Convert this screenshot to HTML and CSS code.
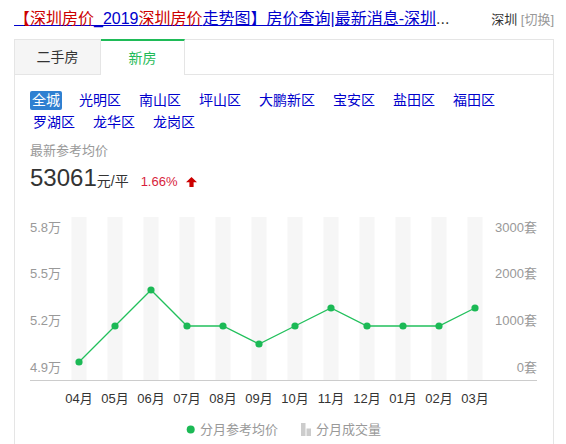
FILE: index.html
```html
<!DOCTYPE html>
<html lang="zh-CN">
<head>
<meta charset="utf-8">
<title>深圳房价</title>
<link rel="stylesheet" href="styles.css">
</head>
<body>
<div class="header">
  <div class="title"><a class="title-link" href="#"><em>【深圳房价</em>_2019<em>深圳房价</em>走势图】房价查询|最新消息-深圳</a><span class="ellipsis">...</span></div>
  <div class="city">深圳 <span class="switch">[切换]</span></div>
</div>
<div class="card">
  <div class="tabs">
    <div class="tab">二手房</div>
    <div class="tab active">新房</div>
    <div class="tab-fill"></div>
  </div>
  <div class="card-body">
    <div class="districts">
      <a class="district current" href="#">全城</a>
      <a class="district" href="#">光明区</a>
      <a class="district" href="#">南山区</a>
      <a class="district" href="#">坪山区</a>
      <a class="district" href="#">大鹏新区</a>
      <a class="district" href="#">宝安区</a>
      <a class="district" href="#">盐田区</a>
      <a class="district" href="#">福田区</a>
      <a class="district row2" href="#">罗湖区</a>
      <a class="district" href="#">龙华区</a>
      <a class="district" href="#">龙岗区</a>
    </div>
    <div class="price-label">最新参考均价</div>
    <div class="price">
      <span class="price-num">53061</span><span class="price-unit">元/平</span><span class="price-change">1.66%</span><svg class="up-arrow" width="11" height="10" viewBox="0 0 11 10"><path d="M5.5 0 L11 5.2 L7.6 5.2 L7.6 10 L3.4 10 L3.4 5.2 L0 5.2 Z" fill="#cc0000"/></svg>
    </div>
    <svg class="chart" width="537" height="244" viewBox="15 200 537 244">
      <g fill="#f6f6f6">
        <rect x="71.5" y="217" width="15" height="163"/>
        <rect x="107.5" y="217" width="15" height="163"/>
        <rect x="143.5" y="217" width="15" height="163"/>
        <rect x="179.5" y="217" width="15" height="163"/>
        <rect x="215.5" y="217" width="15" height="163"/>
        <rect x="251.5" y="217" width="15" height="163"/>
        <rect x="287.5" y="217" width="15" height="163"/>
        <rect x="323.5" y="217" width="15" height="163"/>
        <rect x="359.5" y="217" width="15" height="163"/>
        <rect x="395.5" y="217" width="15" height="163"/>
        <rect x="431.5" y="217" width="15" height="163"/>
        <rect x="467.5" y="217" width="15" height="163"/>
      </g>
      <line x1="30" y1="380.5" x2="537" y2="380.5" stroke="#cccccc" stroke-width="1"/>
      <g class="axis-text" fill="#999999">
        <text x="30" y="227">5.8万</text>
        <text x="30" y="273.5">5.5万</text>
        <text x="30" y="320">5.2万</text>
        <text x="30" y="367">4.9万</text>
      </g>
      <g class="axis-text" fill="#999999" text-anchor="end">
        <text x="537" y="227">3000套</text>
        <text x="537" y="273.5">2000套</text>
        <text x="537" y="320">1000套</text>
        <text x="537" y="367">0套</text>
      </g>
      <polyline fill="none" stroke="#22c05c" stroke-width="1.3" points="79,362 115,326 151,290 187,326 223,326 259,344 295,326 331,308 367,326 403,326 439,326 475,308"/>
      <g fill="#1bb955">
        <circle cx="79" cy="362" r="3.6"/>
        <circle cx="115" cy="326" r="3.6"/>
        <circle cx="151" cy="290" r="3.6"/>
        <circle cx="187" cy="326" r="3.6"/>
        <circle cx="223" cy="326" r="3.6"/>
        <circle cx="259" cy="344" r="3.6"/>
        <circle cx="295" cy="326" r="3.6"/>
        <circle cx="331" cy="308" r="3.6"/>
        <circle cx="367" cy="326" r="3.6"/>
        <circle cx="403" cy="326" r="3.6"/>
        <circle cx="439" cy="326" r="3.6"/>
        <circle cx="475" cy="308" r="3.6"/>
      </g>
      <g class="axis-text" fill="#333333" text-anchor="middle">
        <text x="79" y="398">04月</text>
        <text x="115" y="398">05月</text>
        <text x="151" y="398">06月</text>
        <text x="187" y="398">07月</text>
        <text x="223" y="398">08月</text>
        <text x="259" y="398">09月</text>
        <text x="295" y="398">10月</text>
        <text x="331" y="398">11月</text>
        <text x="367" y="398">12月</text>
        <text x="403" y="398">01月</text>
        <text x="439" y="398">02月</text>
        <text x="475" y="398">03月</text>
      </g>
      <circle cx="190.7" cy="429.5" r="4" fill="#1bb955"/>
      <text class="axis-text legend-text" x="200" y="429.5" fill="#999999">分月参考均价</text>
      <rect x="301" y="423" width="4.5" height="13" fill="#cccccc"/>
      <rect x="306.5" y="428.5" width="4.5" height="7.5" fill="#cccccc"/>
      <text class="axis-text legend-text" x="316" y="429.5" fill="#999999">分月成交量</text>
    </svg>
  </div>
</div>
</body>
</html>
```

FILE: styles.css
```css
html, body {
  margin: 0;
  padding: 0;
  background: #ffffff;
}

body {
  font-family: "Liberation Sans", Arial, "Noto Sans CJK SC", sans-serif;
  color: #333333;
  width: 566px;
  height: 444px;
  overflow: hidden;
}

.header {
  display: flex;
  justify-content: space-between;
  align-items: baseline;
  height: 39px;
  box-sizing: border-box;
  padding: 8px 12px 0 14px;
}

.title {
  font-size: 16px;
  line-height: 22px;
  white-space: nowrap;
}

.title-link {
  color: #0000cc;
  text-decoration: underline;
}

.title-link em {
  font-style: normal;
  color: #cc0000;
}

.ellipsis {
  color: #333333;
}

.city {
  font-size: 13px;
  line-height: 22px;
  color: #333333;
  white-space: nowrap;
}

.switch {
  color: #999999;
}

.card {
  margin-left: 14px;
  width: 540px;
  height: 405px;
  box-sizing: border-box;
  border: 1px solid #e5e5e5;
  border-bottom: none;
}

.tabs {
  display: flex;
  align-items: flex-start;
  height: 35px;
}

.tab {
  width: 85px;
  height: 34px;
  line-height: 34px;
  text-align: center;
  font-size: 14px;
  color: #333333;
  background: #f5f5f5;
  border-right: 1px solid #e5e5e5;
  border-bottom: 1px solid #e5e5e5;
}

.tab.active {
  width: 83px;
  margin-top: -1px;
  height: 34px;
  border-top: 2px solid #1fbb58;
  border-bottom: none;
  background: #ffffff;
  color: #1fbb58;
}

.tab-fill {
  flex: 1;
  height: 34px;
  border-bottom: 1px solid #e5e5e5;
}

.card-body {
  padding: 14px 0 0 15px;
}

.districts {
  display: flex;
  flex-wrap: wrap;
  column-gap: 16px;
  width: 520px;
  height: 44px;
  font-size: 14px;
  line-height: 22px;
}

.district {
  color: #0000cc;
  text-decoration: none;
  padding: 0 1px;
}

.district.row2 {
  padding-left: 3px;
}

.district.current {
  align-self: center;
  height: 19px;
  line-height: 19px;
  margin-top: 1px;
  padding: 0 2px;
  background: #2f80d1;
  color: #ffffff;
  border-radius: 2px;
}

.price-label {
  margin-top: 9px;
  height: 18px;
  line-height: 18px;
  font-size: 13px;
  color: #999999;
}

.price {
  margin-top: 3px;
  height: 30px;
  line-height: 30px;
  white-space: nowrap;
}

.price-num {
  font-size: 24px;
  color: #333333;
}

.price-unit {
  font-size: 14px;
  color: #333333;
}

.price-change {
  font-size: 13px;
  color: #d81e3c;
  margin-left: 12px;
}

.up-arrow {
  margin-left: 8px;
  vertical-align: -1px;
}

.chart {
  display: block;
  margin-top: 7px;
  margin-left: -15px;
}

.axis-text {
  font-family: "Liberation Sans", Arial, "Noto Sans CJK SC", sans-serif;
  font-size: 13px;
  dominant-baseline: central;
}
```
